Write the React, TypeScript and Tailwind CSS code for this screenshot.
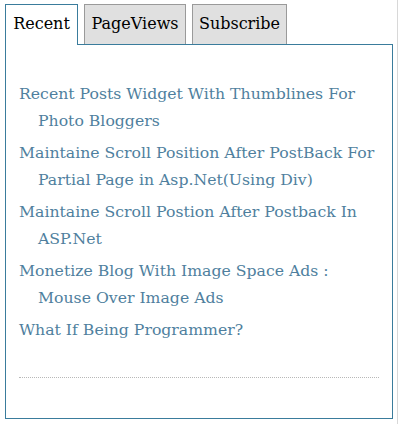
import React from "react";

const posts = [
  "Recent Posts Widget With Thumblines For Photo Bloggers",
  "Maintaine Scroll Position After PostBack For Partial Page in Asp.Net(Using Div)",
  "Maintaine Scroll Postion After Postback In ASP.Net",
  "Monetize Blog With Image Space Ads : Mouse Over Image Ads",
  "What If Being Programmer?",
];

const serif = { fontFamily: '"DejaVu Serif", "Liberation Serif", serif' };

export default function App() {
  return (
    <div className="relative h-[424px] w-[400px] overflow-hidden bg-white" style={serif}>
      <div className="absolute right-[2px] top-0 h-full w-px bg-[#d8d8d8]" />
      <div className="flex items-end gap-[6px] pl-[5px] pt-[4px]">
        <div className="relative z-10 -mb-px flex h-[41px] w-[73px] items-center justify-center border border-b-0 border-[#3a7c9c] bg-white pb-[2px] text-[16px] text-black">
          Recent
        </div>
        <div className="flex h-[40px] w-[102px] items-center justify-center border border-b-0 border-[#9a9a9a] bg-[#e0e0e0] pb-[1px] text-[16px] text-black">
          PageViews
        </div>
        <div className="flex h-[40px] w-[95px] items-center justify-center border border-b-0 border-[#9a9a9a] bg-[#e0e0e0] pb-[1px] text-[16px] text-black">
          Subscribe
        </div>
      </div>
      <div className="ml-[5px] h-[375px] w-[388px] border border-[#3a7c9c] bg-white px-[13px] pt-[35px]">
        <ul className="flex flex-col gap-[5px]">
          {posts.map((p) => (
            <li
              key={p}
              className="pl-[19px] -indent-[19px] text-[15.7px] leading-[27px] text-[#4f7f9e]"
            >
              {p}
            </li>
          ))}
        </ul>
        <div className="mt-[34px] border-t border-dotted border-[#b8b8b8]" />
      </div>
    </div>
  );
}
